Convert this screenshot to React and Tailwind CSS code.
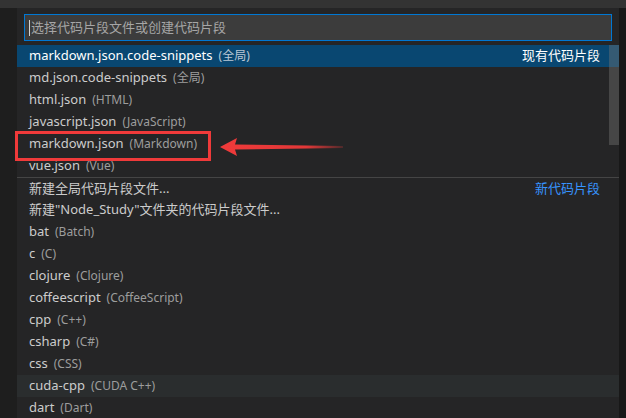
import React from 'react';

const rows = [
    { label: 'markdown.json.code-snippets', desc: '(全局)', selected: true, right: '现有代码片段' },
    { label: 'md.json.code-snippets', desc: '(全局)' },
    { label: 'html.json', desc: '(HTML)' },
    { label: 'javascript.json', desc: '(JavaScript)' },
    { label: 'markdown.json', desc: '(Markdown)' },
    { label: 'vue.json', desc: '(Vue)' },
    { label: '新建全局代码片段文件...', separator: true, rightBlue: '新代码片段' },
    { label: '新建"Node_Study"文件夹的代码片段文件...' },
    { label: 'bat', desc: '(Batch)' },
    { label: 'c', desc: '(C)' },
    { label: 'clojure', desc: '(Clojure)' },
    { label: 'coffeescript', desc: '(CoffeeScript)' },
    { label: 'cpp', desc: '(C++)' },
    { label: 'csharp', desc: '(C#)' },
    { label: 'css', desc: '(CSS)' },
    { label: 'cuda-cpp', desc: '(CUDA C++)', hover: true },
    { label: 'dart', desc: '(Dart)' },
];

const font = { fontFamily: '"Noto Sans", "Noto Sans CJK SC", sans-serif' };

const Row = ({ row }) => {
    const bg = row.selected ? 'bg-[#094771]' : row.hover ? 'bg-[#2a2d2e]' : '';
    return (
        <div className={`h-[22px] flex items-center pl-[12px] pr-[19px] ${bg} ${row.separator ? 'border-t border-[#454545]' : ''}`}>
            <span className={`text-[13px] ${row.selected ? 'text-white' : 'text-[#cccccc]'} whitespace-nowrap`}>{row.label}</span>
            {row.desc && (
                <span className={`ml-[6px] text-[12px] whitespace-nowrap ${row.selected ? 'text-[#b9c8d6]' : 'text-[#9d9d9d]'}`}>{row.desc}</span>
            )}
            <div className="flex-1" />
            {row.right && <span className="text-[13px] text-white">{row.right}</span>}
            {row.rightBlue && <span className="text-[13px] text-[#3794ff]">{row.rightBlue}</span>}
        </div>
    );
};

export default function App() {
    return (
        <div className="w-[626px] h-[418px] overflow-hidden bg-[#1e1e1e] relative" style={font}>
            <div className="h-[8px] bg-[#333333]" />
            <div className="flex h-[410px]">
                <div className="w-[17px] bg-[#1e1e1e]" />
                <div className="w-[602px] bg-[#252526] relative pt-[6px]">
                    <div className="mx-[7px] h-[27px] bg-[#3c3c3c] border border-[#0078d4] flex items-center pl-[4px]">
                        <div className="w-px h-[16px] bg-[#d4d4d4]" />
                        <span className="ml-[1px] text-[13px] text-[#a6a6a6]">选择代码片段文件或创建代码片段</span>
                    </div>
                    <div className="mt-[4px] relative">
                        {rows.map((r, i) => <Row key={i} row={r} />)}
                        {/* scrollbar */}
                        <div className="absolute top-0 right-0 w-[10px] h-[100px] bg-[#79797966]" />
                    </div>
                </div>
                <div className="flex-1 bg-[#181818]" />
            </div>

            {/* annotation */}
            <div className="absolute left-[15px] top-[131px] w-[196px] h-[30px] border-[3px] border-[#f03a3a]" />
            <svg className="absolute left-[218px] top-[136px]" width="130" height="22" viewBox="0 0 130 22">
                <defs>
                    <linearGradient id="tail" x1="0" x2="1" y1="0" y2="0">
                        <stop offset="0" stopColor="#f03a3a" />
                        <stop offset="0.7" stopColor="#e23838" />
                        <stop offset="1" stopColor="#f03a3a" stopOpacity="0.2" />
                    </linearGradient>
                </defs>
                <path d="M2 11 L19 2 L17 8.5 L125 10 L125 12 L17 13.5 L19 20 Z" fill="url(#tail)" />
            </svg>
        </div>
    );
}
